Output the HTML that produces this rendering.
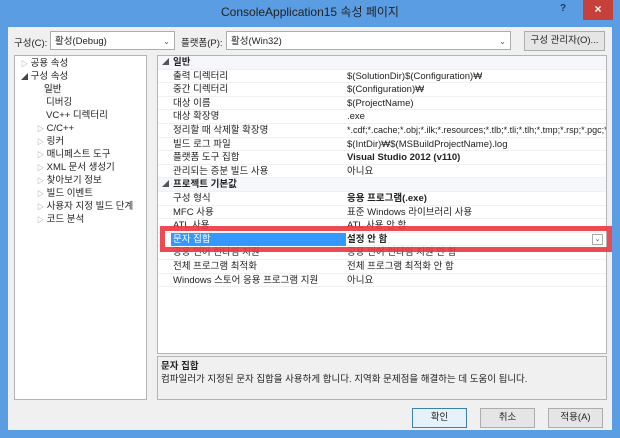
<!DOCTYPE html>
<html><head><meta charset="utf-8"><style>
*{margin:0;padding:0;box-sizing:border-box}
body{width:620px;height:438px;overflow:hidden;background:#5a9de3;font-family:"Liberation Sans","Noto Sans CJK KR",sans-serif;font-size:9.5px;color:#222;position:relative}
.abs{position:absolute}
.title{left:0;top:0;width:620px;height:26px;text-align:center;line-height:24px;font-size:12px;color:#222}
.close{left:583px;top:0;width:30px;height:20px;background:#c7413c;color:#fff;text-align:center;line-height:19px;font-size:12px;font-weight:bold}
.q{left:560px;top:3px;color:#1b3a6b;font-weight:bold;font-size:10px}
.body{left:8px;top:27px;width:604px;height:403px;background:#f0f0f0}
.combo{background:#fff;border:1px solid #adadad;height:19px;line-height:19px;padding-left:4px}
.arr{position:absolute;right:4px;top:0;font-size:8px;color:#555}
.btn{background:#e5e5e5;border:1px solid #adadad;height:20px;line-height:18px;text-align:center}
.box{background:#fff;border:1px solid #b4b4b4}
.row{position:absolute;left:0;width:448px;height:13.6px;line-height:13px;border-bottom:1px solid #f0f0f0;white-space:nowrap}
.row .n{position:absolute;left:15px}
.row .v{position:absolute;left:189px}
.sec{background:#f5f7fa;font-weight:bold}
.sec .n{left:15px}
.tri{position:absolute;left:4px;font-size:7px;color:#555}
.t{position:absolute;white-space:nowrap;line-height:12px}
</style></head><body>
<div class="abs title">ConsoleApplication15 속성 페이지</div>
<div class="abs q">?</div>
<div class="abs close">×</div>
<div class="abs body"></div>
<div class="abs" style="left:14px;top:35px">구성(C):</div>
<div class="abs combo" style="left:50px;top:31px;width:125px">활성(Debug)<span class="arr">⌄</span></div>
<div class="abs" style="left:181px;top:35px">플랫폼(P):</div>
<div class="abs combo" style="left:226px;top:31px;width:285px">활성(Win32)<span class="arr">⌄</span></div>
<div class="abs btn" style="left:524px;top:31px;width:81px">구성 관리자(O)...</div>

<div class="abs box" style="left:14px;top:55px;width:133px;height:345px">
<div class="t" style="left:6px;top:2px"><span style="font-size:7px;color:#888">▷</span> 공용 속성</div>
<div class="t" style="left:6px;top:15px"><span style="font-size:7px;color:#444">◢</span> 구성 속성</div>
<div class="t" style="left:29px;top:28px;background:#f3f3f3">일반</div>
<div class="t" style="left:31px;top:41px">디버깅</div>
<div class="t" style="left:31px;top:54px">VC++ 디렉터리</div>
<div class="t" style="left:22px;top:67px"><span style="font-size:7px;color:#888">▷</span> C/C++</div>
<div class="t" style="left:22px;top:80px"><span style="font-size:7px;color:#888">▷</span> 링커</div>
<div class="t" style="left:22px;top:93px"><span style="font-size:7px;color:#888">▷</span> 매니페스트 도구</div>
<div class="t" style="left:22px;top:106px"><span style="font-size:7px;color:#888">▷</span> XML 문서 생성기</div>
<div class="t" style="left:22px;top:119px"><span style="font-size:7px;color:#888">▷</span> 찾아보기 정보</div>
<div class="t" style="left:22px;top:132px"><span style="font-size:7px;color:#888">▷</span> 빌드 이벤트</div>
<div class="t" style="left:22px;top:145px"><span style="font-size:7px;color:#888">▷</span> 사용자 지정 빌드 단계</div>
<div class="t" style="left:22px;top:158px"><span style="font-size:7px;color:#888">▷</span> 코드 분석</div>
</div>

<div class="abs box" style="left:157px;top:55px;width:450px;height:299px;overflow:hidden">
<div class="row sec" style="top:0"><span class="tri">◢</span><span class="n">일반</span></div>
<div class="row" style="top:13.6px"><span class="n">출력 디렉터리</span><span class="v">$(SolutionDir)$(Configuration)₩</span></div>
<div class="row" style="top:27.2px"><span class="n">중간 디렉터리</span><span class="v">$(Configuration)₩</span></div>
<div class="row" style="top:40.8px"><span class="n">대상 이름</span><span class="v">$(ProjectName)</span></div>
<div class="row" style="top:54.4px"><span class="n">대상 확장명</span><span class="v">.exe</span></div>
<div class="row" style="top:68px"><span class="n">정리할 때 삭제할 확장명</span><span class="v" style="font-size:9px">*.cdf;*.cache;*.obj;*.ilk;*.resources;*.tlb;*.tli;*.tlh;*.tmp;*.rsp;*.pgc;*.pgd</span></div>
<div class="row" style="top:81.6px"><span class="n">빌드 로그 파일</span><span class="v">$(IntDir)₩$(MSBuildProjectName).log</span></div>
<div class="row" style="top:95.2px"><span class="n">플랫폼 도구 집합</span><span class="v" style="font-weight:bold">Visual Studio 2012 (v110)</span></div>
<div class="row" style="top:108.8px"><span class="n">관리되는 증분 빌드 사용</span><span class="v">아니요</span></div>
<div class="row sec" style="top:122.4px"><span class="tri">◢</span><span class="n">프로젝트 기본값</span></div>
<div class="row" style="top:136px"><span class="n">구성 형식</span><span class="v" style="font-weight:bold">응용 프로그램(.exe)</span></div>
<div class="row" style="top:149.6px"><span class="n">MFC 사용</span><span class="v">표준 Windows 라이브러리 사용</span></div>
<div class="row" style="top:163.2px"><span class="n">ATL 사용</span><span class="v">ATL 사용 안 함</span></div>
<div class="row" style="top:176.8px"><span style="position:absolute;left:11px;top:0;width:177px;height:13px;background:#3399ff;border-left:2px solid #fff"></span><span class="n" style="color:#fff">문자 집합</span><span class="v" style="font-weight:bold">설정 안 함</span><span style="position:absolute;right:3px;top:1px;width:11px;height:11px;border:1px solid #aaa;font-size:7px;line-height:9px;text-align:center;color:#444">⌄</span></div>
<div class="row" style="top:190.4px"><span class="n">공용 언어 런타임 지원</span><span class="v">공용 언어 런타임 지원 안 함</span></div>
<div class="row" style="top:204px"><span class="n">전체 프로그램 최적화</span><span class="v">전체 프로그램 최적화 안 함</span></div>
<div class="row" style="top:217.6px"><span class="n">Windows 스토어 응용 프로그램 지원</span><span class="v">아니요</span></div>
</div>
<div class="abs" style="left:160px;top:226px;width:452px;height:26px;border:5px solid rgba(235,55,65,0.9)"></div>

<div class="abs" style="left:157px;top:356px;width:450px;height:44px;border:1px solid #b4b4b4;background:#f0f0f0">
<div class="t" style="left:3px;top:4px;font-weight:bold">문자 집합</div>
<div class="t" style="left:3px;top:17px">컴파일러가 지정된 문자 집합을 사용하게 합니다. 지역화 문제점을 해결하는 데 도움이 됩니다.</div>
</div>
<div class="abs btn" style="left:412px;top:408px;width:55px;border-color:#3c7fb1;background:#e5f1fb">확인</div>
<div class="abs btn" style="left:480px;top:408px;width:55px">취소</div>
<div class="abs btn" style="left:548px;top:408px;width:55px">적용(A)</div>
</body></html>
